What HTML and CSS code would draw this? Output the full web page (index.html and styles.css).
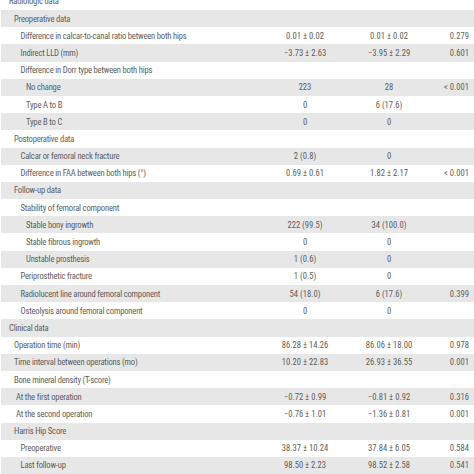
FILE: index.html
```html
<!DOCTYPE html>
<html>
<head>
<meta charset="utf-8">
<link rel="stylesheet" href="styles.css">
</head>
<body>
<div class="table">
  <div class="row"><div class="lbl l0">Radiologic data</div><div class="c1"></div><div class="c2"></div><div class="p"></div></div>
  <div class="row alt"><div class="lbl l1">Preoperative data</div><div class="c1"></div><div class="c2"></div><div class="p"></div></div>
  <div class="row"><div class="lbl l2">Difference in calcar-to-canal ratio between both hips</div><div class="c1">0.01 ± 0.02</div><div class="c2">0.01 ± 0.02</div><div class="p">0.279</div></div>
  <div class="row alt"><div class="lbl l2">Indirect LLD (mm)</div><div class="c1">−3.73 ± 2.63</div><div class="c2">−3.95 ± 2.29</div><div class="p">0.601</div></div>
  <div class="row"><div class="lbl l2">Difference in Dorr type between both hips</div><div class="c1"></div><div class="c2"></div><div class="p"></div></div>
  <div class="row alt"><div class="lbl l3">No change</div><div class="c1">223</div><div class="c2">28</div><div class="p">&lt; 0.001</div></div>
  <div class="row"><div class="lbl l3">Type A to B</div><div class="c1">0</div><div class="c2">6 (17.6)</div><div class="p"></div></div>
  <div class="row alt"><div class="lbl l3">Type B to C</div><div class="c1">0</div><div class="c2">0</div><div class="p"></div></div>
  <div class="row"><div class="lbl l1">Postoperative data</div><div class="c1"></div><div class="c2"></div><div class="p"></div></div>
  <div class="row alt"><div class="lbl l2">Calcar or femoral neck fracture</div><div class="c1">2 (0.8)</div><div class="c2">0</div><div class="p"></div></div>
  <div class="row"><div class="lbl l2">Difference in FAA between both hips (°)</div><div class="c1">0.69 ± 0.61</div><div class="c2">1.82 ± 2.17</div><div class="p">&lt; 0.001</div></div>
  <div class="row alt"><div class="lbl l1">Follow-up data</div><div class="c1"></div><div class="c2"></div><div class="p"></div></div>
  <div class="row"><div class="lbl l2">Stability of femoral component</div><div class="c1"></div><div class="c2"></div><div class="p"></div></div>
  <div class="row alt"><div class="lbl l3">Stable bony ingrowth</div><div class="c1">222 (99.5)</div><div class="c2">34 (100.0)</div><div class="p"></div></div>
  <div class="row"><div class="lbl l3">Stable fibrous ingrowth</div><div class="c1">0</div><div class="c2">0</div><div class="p"></div></div>
  <div class="row alt"><div class="lbl l3">Unstable prosthesis</div><div class="c1">1 (0.6)</div><div class="c2">0</div><div class="p"></div></div>
  <div class="row"><div class="lbl l2">Periprosthetic fracture</div><div class="c1">1 (0.5)</div><div class="c2">0</div><div class="p"></div></div>
  <div class="row alt"><div class="lbl l2">Radiolucent line around femoral component</div><div class="c1">54 (18.0)</div><div class="c2">6 (17.6)</div><div class="p">0.399</div></div>
  <div class="row"><div class="lbl l2">Osteolysis around femoral component</div><div class="c1">0</div><div class="c2">0</div><div class="p"></div></div>
  <div class="row alt"><div class="lbl l0">Clinical data</div><div class="c1"></div><div class="c2"></div><div class="p"></div></div>
  <div class="row"><div class="lbl l1">Operation time (min)</div><div class="c1">86.28 ± 14.26</div><div class="c2">86.06 ± 18.00</div><div class="p">0.978</div></div>
  <div class="row alt"><div class="lbl l1">Time interval between operations (mo)</div><div class="c1">10.20 ± 22.83</div><div class="c2">26.93 ± 36.55</div><div class="p">0.001</div></div>
  <div class="row"><div class="lbl l1">Bone mineral density (T-score)</div><div class="c1"></div><div class="c2"></div><div class="p"></div></div>
  <div class="row alt"><div class="lbl l15">At the first operation</div><div class="c1">−0.72 ± 0.99</div><div class="c2">−0.81 ± 0.92</div><div class="p">0.316</div></div>
  <div class="row"><div class="lbl l15">At the second operation</div><div class="c1">−0.76 ± 1.01</div><div class="c2">−1.36 ± 0.81</div><div class="p">0.001</div></div>
  <div class="row alt"><div class="lbl l1">Harris Hip Score</div><div class="c1"></div><div class="c2"></div><div class="p"></div></div>
  <div class="row"><div class="lbl l2">Preoperative</div><div class="c1">38.37 ± 10.24</div><div class="c2">37.84 ± 6.05</div><div class="p">0.584</div></div>
  <div class="row alt"><div class="lbl l2">Last follow-up</div><div class="c1">98.50 ± 2.23</div><div class="c2">98.52 ± 2.58</div><div class="p">0.541</div></div>
</div>
</body>
</html>
```
FILE: styles.css
```css
html, body {
  margin: 0;
  padding: 0;
  background: #ffffff;
}
body {
  width: 474px;
  height: 474px;
  overflow: hidden;
  font-family: "Roboto Condensed", "Liberation Sans", sans-serif;
  font-size: 8.6px;
  color: #5e5e5e;
}
.table {
  margin-top: -7.2px;
  margin-left: 1px;
  display: flex;
  flex-direction: column;
}
.row {
  display: grid;
  grid-template-columns: 262px 84px 84px 43px;
  height: 17.19px;
  align-items: center;
  white-space: nowrap;
}
.row.alt {
  background: #e7e7e7;
}
.lbl {
  padding-left: 8px;
  letter-spacing: -0.2px;
}
.l1 { padding-left: 13px; }
.l15 { padding-left: 15px; }
.l2 { padding-left: 19.5px; }
.l3 { padding-left: 25px; }
.c1, .c2 { text-align: center; }
.p { text-align: right; padding-right: 5px; }
```
